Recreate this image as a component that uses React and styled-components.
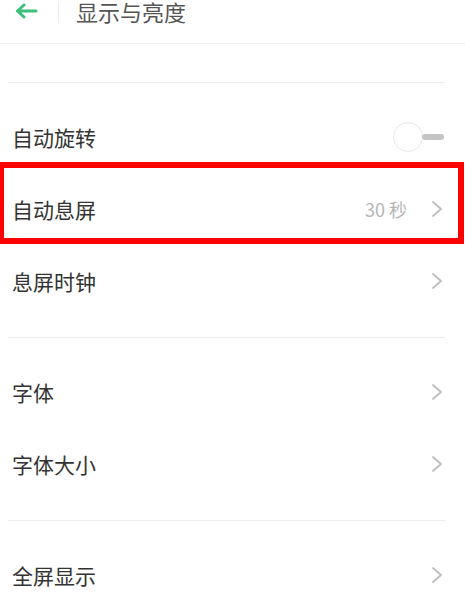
import styled, { createGlobalStyle } from "styled-components";

const GlobalStyle = createGlobalStyle`
  body {
    margin: 0;
    background: #fff;
    font-family: "Noto Sans CJK SC", "Noto Sans", sans-serif;
  }
`;

const Page = styled.div`
  width: 465px;
  height: 607px;
  overflow: hidden;
  background: #fff;
`;

const Header = styled.div`
  display: flex;
  align-items: center;
  height: 24px;
  padding: 0 0 19px 14px;
  border-bottom: 1px solid #f0f0f0;
`;

const BackArrow = styled.svg`
  width: 24px;
  height: 16px;
  display: block;
  margin-top: -2px;
`;

const HeaderSep = styled.div`
  width: 1px;
  height: 22px;
  background: #ececec;
  margin: 0 17px 0 20px;
`;

const Title = styled.div`
  font-size: 22px;
  line-height: 24px;
  color: #555;
  margin-top: -3px;
`;

const Gap = styled.div`
  height: 38px;
`;

const Divider = styled.div`
  height: 1px;
  margin: 0 20px 0 8px;
  background: #ececec;
`;

const Section = styled.div`
  padding: 18px 0 20px;
`;

const Row = styled.div`
  position: relative;
  display: flex;
  align-items: center;
  height: 72px;
  padding: 0 22px 0 12px;

  ${(p) =>
    p.$marked &&
    `
    &::after {
      content: "";
      position: absolute;
      left: 0;
      right: 1px;
      top: -11px;
      bottom: 1px;
      border: 6px solid #f00;
      border-left-width: 4px;
    }
  `}
`;

const Label = styled.div`
  flex: 1;
  font-size: 21px;
  color: #333;
`;

const Value = styled.div`
  font-size: 18px;
  color: #b5b5b5;
  margin-right: 24px;
`;

const Chevron = styled.svg`
  width: 12px;
  height: 18px;
  display: block;
`;

const Toggle = styled.div`
  display: flex;
  align-items: center;
  margin-right: -1px;
`;

const Knob = styled.div`
  width: 30px;
  height: 30px;
  border-radius: 50%;
  border: 1px solid #e8e8e8;
  background: #fff;
  box-sizing: border-box;
`;

const Track = styled.div`
  width: 22px;
  height: 6px;
  border-radius: 3px;
  background: #c4c4c4;
  margin-left: -1px;
`;

const Arrow = () => (
  <BackArrow viewBox="0 0 24 16">
    <path
      d="M22 8H4M10 2L3.5 8L10 14"
      fill="none"
      stroke="#3dbf7d"
      strokeWidth="3"
      strokeLinecap="round"
      strokeLinejoin="round"
    />
  </BackArrow>
);

const Next = () => (
  <Chevron viewBox="0 0 12 18">
    <path
      d="M2 2L10 9L2 16"
      fill="none"
      stroke="#bdbdbd"
      strokeWidth="1.8"
      strokeLinecap="round"
      strokeLinejoin="round"
    />
  </Chevron>
);

const sections = [
  [
    { label: "自动旋转", toggle: true },
    { label: "自动息屏", value: "30 秒", marked: true },
    { label: "息屏时钟" },
  ],
  [{ label: "字体" }, { label: "字体大小" }],
  [{ label: "全屏显示" }],
];

export default function App() {
  return (
    <Page>
      <GlobalStyle />
      <Header>
        <Arrow />
        <HeaderSep />
        <Title>显示与亮度</Title>
      </Header>
      <Gap />
      {sections.map((rows, i) => (
        <div key={i}>
          <Divider />
          <Section>
            {rows.map((r) => (
              <Row key={r.label} $marked={r.marked}>
                <Label>{r.label}</Label>
                {r.value && <Value>{r.value}</Value>}
                {r.toggle ? (
                  <Toggle>
                    <Knob />
                    <Track />
                  </Toggle>
                ) : (
                  <Next />
                )}
              </Row>
            ))}
          </Section>
        </div>
      ))}
    </Page>
  );
}
